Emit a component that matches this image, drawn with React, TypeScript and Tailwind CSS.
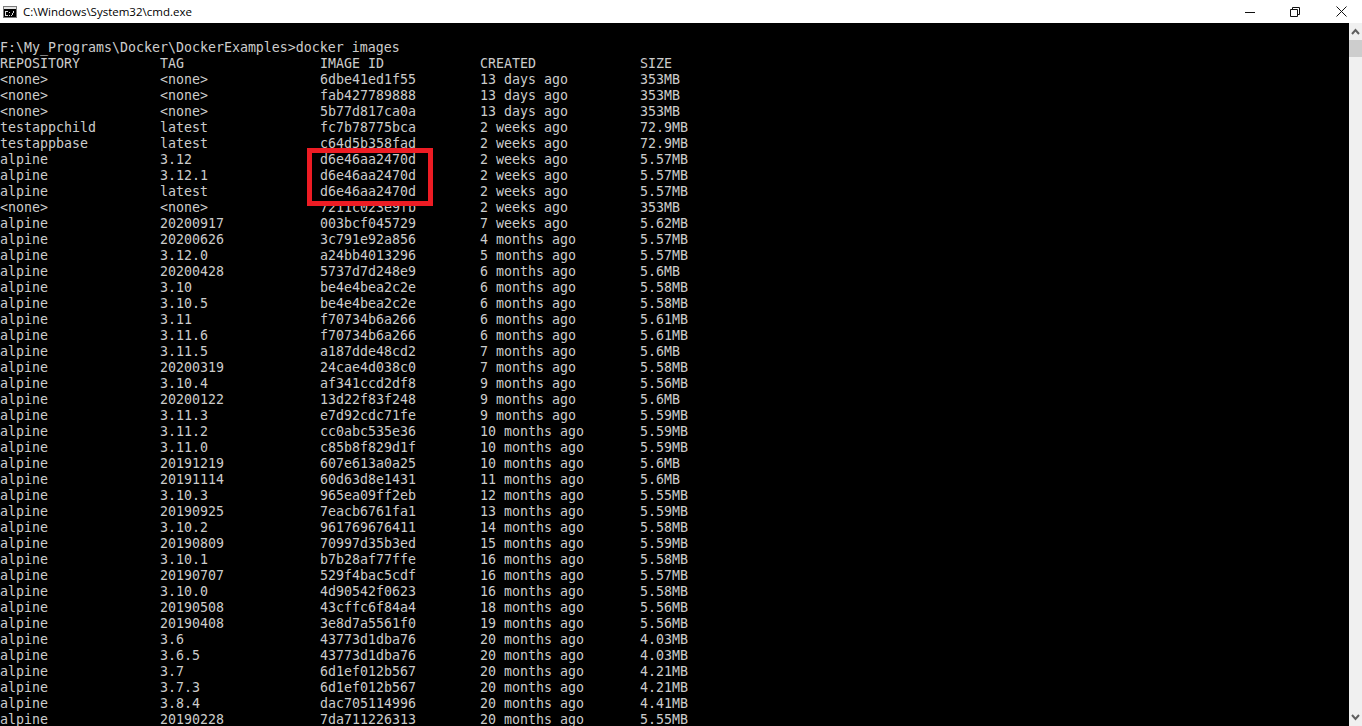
const rows: string[][] = [
  ["<none>", "<none>", "6dbe41ed1f55", "13 days ago", "353MB"],
  ["<none>", "<none>", "fab427789888", "13 days ago", "353MB"],
  ["<none>", "<none>", "5b77d817ca0a", "13 days ago", "353MB"],
  ["testappchild", "latest", "fc7b78775bca", "2 weeks ago", "72.9MB"],
  ["testappbase", "latest", "c64d5b358fad", "2 weeks ago", "72.9MB"],
  ["alpine", "3.12", "d6e46aa2470d", "2 weeks ago", "5.57MB"],
  ["alpine", "3.12.1", "d6e46aa2470d", "2 weeks ago", "5.57MB"],
  ["alpine", "latest", "d6e46aa2470d", "2 weeks ago", "5.57MB"],
  ["<none>", "<none>", "7211c023e9fb", "2 weeks ago", "353MB"],
  ["alpine", "20200917", "003bcf045729", "7 weeks ago", "5.62MB"],
  ["alpine", "20200626", "3c791e92a856", "4 months ago", "5.57MB"],
  ["alpine", "3.12.0", "a24bb4013296", "5 months ago", "5.57MB"],
  ["alpine", "20200428", "5737d7d248e9", "6 months ago", "5.6MB"],
  ["alpine", "3.10", "be4e4bea2c2e", "6 months ago", "5.58MB"],
  ["alpine", "3.10.5", "be4e4bea2c2e", "6 months ago", "5.58MB"],
  ["alpine", "3.11", "f70734b6a266", "6 months ago", "5.61MB"],
  ["alpine", "3.11.6", "f70734b6a266", "6 months ago", "5.61MB"],
  ["alpine", "3.11.5", "a187dde48cd2", "7 months ago", "5.6MB"],
  ["alpine", "20200319", "24cae4d038c0", "7 months ago", "5.58MB"],
  ["alpine", "3.10.4", "af341ccd2df8", "9 months ago", "5.56MB"],
  ["alpine", "20200122", "13d22f83f248", "9 months ago", "5.6MB"],
  ["alpine", "3.11.3", "e7d92cdc71fe", "9 months ago", "5.59MB"],
  ["alpine", "3.11.2", "cc0abc535e36", "10 months ago", "5.59MB"],
  ["alpine", "3.11.0", "c85b8f829d1f", "10 months ago", "5.59MB"],
  ["alpine", "20191219", "607e613a0a25", "10 months ago", "5.6MB"],
  ["alpine", "20191114", "60d63d8e1431", "11 months ago", "5.6MB"],
  ["alpine", "3.10.3", "965ea09ff2eb", "12 months ago", "5.55MB"],
  ["alpine", "20190925", "7eacb6761fa1", "13 months ago", "5.59MB"],
  ["alpine", "3.10.2", "961769676411", "14 months ago", "5.58MB"],
  ["alpine", "20190809", "70997d35b3ed", "15 months ago", "5.59MB"],
  ["alpine", "3.10.1", "b7b28af77ffe", "16 months ago", "5.58MB"],
  ["alpine", "20190707", "529f4bac5cdf", "16 months ago", "5.57MB"],
  ["alpine", "3.10.0", "4d90542f0623", "16 months ago", "5.58MB"],
  ["alpine", "20190508", "43cffc6f84a4", "18 months ago", "5.56MB"],
  ["alpine", "20190408", "3e8d7a5561f0", "19 months ago", "5.56MB"],
  ["alpine", "3.6", "43773d1dba76", "20 months ago", "4.03MB"],
  ["alpine", "3.6.5", "43773d1dba76", "20 months ago", "4.03MB"],
  ["alpine", "3.7", "6d1ef012b567", "20 months ago", "4.21MB"],
  ["alpine", "3.7.3", "6d1ef012b567", "20 months ago", "4.21MB"],
  ["alpine", "3.8.4", "dac705114996", "20 months ago", "4.41MB"],
  ["alpine", "20190228", "7da711226313", "20 months ago", "5.55MB"],
];

function Row({ cells }: { cells: string[] }) {
  return (
    <div className="grid h-4 grid-cols-[160px_160px_160px_160px_160px]">
      {cells.map((c, i) => (
        <span key={i}>{c}</span>
      ))}
    </div>
  );
}

export default function App() {
  return (
    <div className="flex h-[726px] w-[1362px] flex-col overflow-hidden bg-black">
      <div className="flex h-[23px] shrink-0 items-center bg-white">
        <svg width="14" height="12" viewBox="0 0 14 12" className="ml-[3px] shrink-0">
          <rect x="0" y="0" width="14" height="12" fill="#7a7a7a" />
          <rect x="1" y="1" width="12" height="2" fill="#e4e4e4" />
          <rect x="1" y="3" width="12" height="8" fill="#000" />
          <rect x="2" y="5" width="3" height="1" fill="#ddd" />
          <rect x="2" y="6" width="1" height="3" fill="#ddd" />
          <rect x="2" y="9" width="3" height="1" fill="#ddd" />
          <rect x="6" y="6" width="1" height="1" fill="#ddd" />
          <rect x="6" y="9" width="1" height="1" fill="#ddd" />
          <rect x="8" y="9" width="1" height="1" fill="#ddd" />
          <rect x="9" y="7" width="1" height="2" fill="#ddd" />
          <rect x="10" y="5" width="1" height="2" fill="#ddd" />
        </svg>
        <span className="ml-[6px] font-['Open_Sans',sans-serif] text-[11.5px] leading-none text-black">
          C:\Windows\System32\cmd.exe
        </span>
        <div className="ml-auto -mr-[2px] flex h-full">
          <div className="flex w-[45px] items-center justify-center">
            <svg width="10" height="10" viewBox="0 0 10 10">
              <rect x="0" y="5" width="10" height="1" fill="#111" />
            </svg>
          </div>
          <div className="flex w-[46px] items-center justify-center">
            <svg width="10" height="10" viewBox="0 0 10 10" fill="none" stroke="#111">
              <path d="M.5 2.5h7v7h-7z" />
              <path d="M2.5 2.5v-2h7v7h-2" />
            </svg>
          </div>
          <div className="flex w-[46px] items-center justify-center">
            <svg width="11" height="11" viewBox="0 0 11 11" fill="none" stroke="#111">
              <path d="M.5.5l10 10M10.5.5l-10 10" />
            </svg>
          </div>
        </div>
      </div>
      <div className="flex min-h-0 flex-1">
        <div className="relative min-w-0 flex-1 overflow-hidden whitespace-pre pt-[1px] font-['DejaVu_Sans_Mono',monospace] text-[13.29px] leading-4 text-[#cccccc]">
          <div className="h-4" />
          <div className="h-4">F:\My_Programs\Docker\DockerExamples&gt;docker images</div>
          <Row cells={["REPOSITORY", "TAG", "IMAGE ID", "CREATED", "SIZE"]} />
          {rows.map((r, i) => (
            <Row key={i} cells={r} />
          ))}
          <div className="absolute left-[307px] top-[125px] h-[58px] w-[126px] border-[5px] border-[#ed1c24]" />
        </div>
        <div className="flex w-[13px] shrink-0 flex-col bg-[#f0f0f0]">
          <div className="flex h-[17px] items-center justify-center">
            <svg width="9" height="7" viewBox="0 0 9 7" fill="none" stroke="#606060" strokeWidth="2">
              <path d="M1 6l3.5-4 3.5 4" />
            </svg>
          </div>
          <div className="h-[17px] bg-[#cdcdcd]" />
          <div className="flex flex-1 items-end justify-center pb-[5px]">
            <svg width="9" height="7" viewBox="0 0 9 7" fill="none" stroke="#606060" strokeWidth="2">
              <path d="M1 1l3.5 4 3.5-4" />
            </svg>
          </div>
        </div>
      </div>
    </div>
  );
}
